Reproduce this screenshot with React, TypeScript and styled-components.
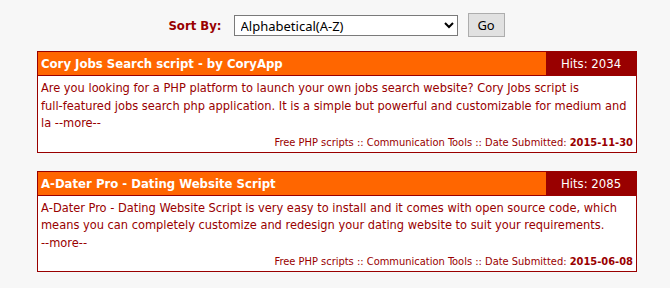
import styled, { createGlobalStyle } from "styled-components";

const scripts = [
  {
    title: "Cory Jobs Search script - by CoryApp",
    hits: 2034,
    description:
      "Are you looking for a PHP platform to launch your own jobs search website? Cory Jobs script is full\u2011featured jobs search php application. It is a simple but powerful and customizable for medium and la",
    date: "2015-11-30",
  },
  {
    title: "A-Dater Pro - Dating Website Script",
    hits: 2085,
    description:
      "A\u2011Dater Pro - Dating Website Script is very easy to install and it comes with open source code, which means you can completely customize and redesign your dating website to suit your requirements.",
    date: "2015-06-08",
  },
];

const GlobalStyle = createGlobalStyle`
  body {
    margin: 0;
    background: #f7f7f7;
    font-family: "DejaVu Sans Condensed", "DejaVu Sans", sans-serif;
  }
`;

export default function App() {
  return (
    <>
      <GlobalStyle />
      <StyledPage>
        <StyledSortBar>
          <StyledSortLabel>Sort By:</StyledSortLabel>
          <StyledSelect defaultValue="az">
            <option value="az">Alphabetical(A-Z)</option>
            <option value="za">Alphabetical(Z-A)</option>
            <option value="hits">Most Hits</option>
            <option value="date">Newest</option>
          </StyledSelect>
          <StyledGoButton>Go</StyledGoButton>
        </StyledSortBar>

        <StyledList>
          {scripts.map((script) => (
            <StyledCard key={script.title}>
              <StyledCardHeader>
                <StyledCardTitle>{script.title}</StyledCardTitle>
                <StyledHits>Hits: {script.hits}</StyledHits>
              </StyledCardHeader>
              <StyledDescription>
                {script.description} <StyledMore href="#">--more--</StyledMore>
              </StyledDescription>
              <StyledMeta>
                Free PHP scripts :: Communication Tools :: Date Submitted:{" "}
                <strong>{script.date}</strong>
              </StyledMeta>
            </StyledCard>
          ))}
        </StyledList>
      </StyledPage>
    </>
  );
}

const StyledPage = styled.div`
  width: 600px;
  margin-left: 37px;
  padding-top: 13px;
`;

const StyledSortBar = styled.div`
  display: flex;
  justify-content: center;
  align-items: center;
  gap: 10px;
  padding-right: 1px;
`;

const StyledSortLabel = styled.strong`
  font-size: 13px;
  color: #990000;
  margin-right: 2px;
`;

const StyledSelect = styled.select`
  width: 224px;
  height: 21px;
  padding: 0 2px;
  font-family: "Noto Sans", "Open Sans", sans-serif;
  font-size: 13px;
  color: #000;
  background: #fff;
  border: 1px solid #7a7a7a;
  border-radius: 0;
`;

const StyledGoButton = styled.button`
  width: 37px;
  height: 24px;
  padding: 0;
  font-family: "Noto Sans", "Open Sans", sans-serif;
  font-size: 13px;
  color: #000;
  background: #e1e1e1;
  border: 1px solid #adadad;
`;

const StyledList = styled.div`
  display: flex;
  flex-direction: column;
  gap: 18px;
  margin-top: 14px;
`;

const StyledCard = styled.section`
  border: 1px solid #990000;
  background: #fff;
  color: #990000;
`;

const StyledCardHeader = styled.header`
  display: flex;
  height: 23px;
  background: #ff6600;
  border-bottom: 1px solid #990000;
`;

const StyledCardTitle = styled.strong`
  flex: 1;
  display: flex;
  align-items: center;
  padding-left: 3px;
  font-size: 13px;
  color: #fff;
`;

const StyledHits = styled.span`
  width: 90px;
  display: flex;
  align-items: center;
  justify-content: center;
  background: #990000;
  font-size: 13px;
  color: #fff;
`;

const StyledDescription = styled.p`
  margin: 0;
  padding: 3px 3px 0;
  font-size: 12.7px;
  line-height: 17.5px;
`;

const StyledMore = styled.a`
  color: #990000;
  text-decoration: none;
  white-space: nowrap;
`;

const StyledMeta = styled.p`
  margin: 0;
  padding: 4px 3px 2px;
  text-align: right;
  font-size: 11px;
  line-height: 14px;
`;
